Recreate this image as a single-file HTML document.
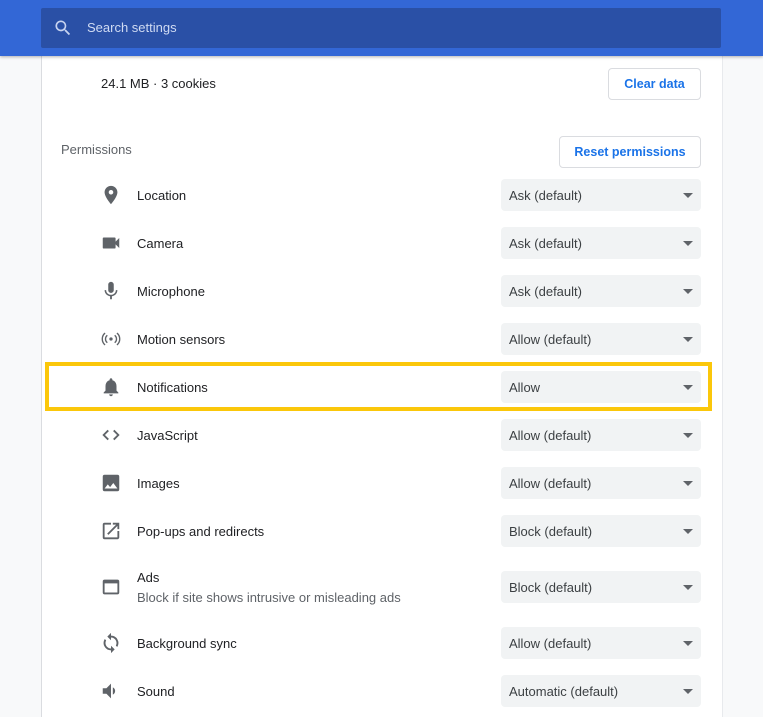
<!DOCTYPE html>
<html><head><style>
body{margin:0;width:763px;height:717px;overflow:hidden;background:#f8f9fa;font-family:"Liberation Sans",sans-serif;font-size:13px;color:#202124;position:relative}
.hdr{position:absolute;left:0;top:0;width:763px;height:56px;background:#3367d6;box-shadow:0 1px 3px rgba(0,0,0,.3);z-index:2}
.search{position:absolute;left:41px;top:8px;width:680px;height:40px;background:#2a50a6;border-radius:2px}
.search span{position:absolute;left:46px;top:12px;color:#d0dbf3;font-size:13px}
.card{position:absolute;left:41px;top:56px;width:680px;height:661px;background:#fff;border-left:1px solid #dadce0;border-right:1px solid #e8eaed}
.abs{position:absolute}
.btn{position:absolute;border:1px solid #dadce0;border-radius:4px;color:#1a73e8;font-weight:bold;font-size:12.5px;text-align:center;box-sizing:border-box;background:#fff}
.sel{position:absolute;left:501px;width:200px;height:32px;background:#f1f3f4;border-radius:4px}
.sel span{position:absolute;left:8px;top:9px;color:#3c4043}
.sel i{position:absolute;right:8px;top:14px;border-left:5px solid transparent;border-right:5px solid transparent;border-top:5px solid #5f6368}
.lbl{position:absolute;left:137px;color:#202124}
.ic{position:absolute;left:100px;width:22px;height:22px}
.hl{position:absolute;left:45px;top:362px;width:667px;height:49px;border:4px solid #fbc70a;box-sizing:border-box}
</style></head><body>
<div class="hdr"><div class="search">
<svg class="abs" style="left:12px;top:10px" width="20" height="20" viewBox="0 0 24 24"><path fill="#c8d4f0" d="M15.5 14h-.8l-.3-.3A6.5 6.5 0 1 0 9.5 16c1.6 0 3.1-.6 4.2-1.6l.3.3v.8l5 5 1.5-1.5-5-5zm-6 0C7 14 5 12 5 9.5S7 5 9.5 5 14 7 14 9.5 12 14 9.5 14z"/></svg>
<span>Search settings</span></div></div>
<div class="card"></div>
<div class="abs" style="left:101px;top:76px;color:#202124">24.1 MB · 3 cookies</div>
<div class="btn" style="left:608px;top:68px;width:93px;height:32px;line-height:30px">Clear data</div>
<div class="abs" style="left:61px;top:142px;color:#5f6368">Permissions</div>
<div class="btn" style="left:559px;top:136px;width:142px;height:32px;line-height:30px">Reset permissions</div>
<div class="hl"></div>

<svg class="ic" style="top:184px" viewBox="0 0 24 24"><path fill="#5f6368" d="M12 2C8.1 2 5 5.1 5 9c0 5.2 7 13 7 13s7-7.8 7-13c0-3.9-3.1-7-7-7zm0 9.5a2.5 2.5 0 1 1 0-5 2.5 2.5 0 0 1 0 5z"/></svg>
<div class="lbl" style="top:188px">Location</div>
<div class="sel" style="top:179px"><span>Ask (default)</span><i></i></div>

<svg class="ic" style="top:232px" viewBox="0 0 24 24"><path fill="#5f6368" d="M17 10.5V7a1 1 0 0 0-1-1H4a1 1 0 0 0-1 1v10a1 1 0 0 0 1 1h12a1 1 0 0 0 1-1v-3.5l4 4v-11l-4 4z"/></svg>
<div class="lbl" style="top:236px">Camera</div>
<div class="sel" style="top:227px"><span>Ask (default)</span><i></i></div>

<svg class="ic" style="top:280px" viewBox="0 0 24 24"><path fill="#5f6368" d="M12 14c1.7 0 3-1.3 3-3V5c0-1.7-1.3-3-3-3S9 3.3 9 5v6c0 1.7 1.3 3 3 3zm5.3-3c0 3-2.5 5.1-5.3 5.1S6.7 14 6.7 11H5c0 3.4 2.7 6.2 6 6.7V21h2v-3.3c3.3-.5 6-3.3 6-6.7h-1.7z"/></svg>
<div class="lbl" style="top:284px">Microphone</div>
<div class="sel" style="top:275px"><span>Ask (default)</span><i></i></div>

<svg class="ic" style="top:328px" viewBox="0 0 24 24"><g fill="none" stroke="#5f6368" stroke-width="1.5"><path d="M8 8a5 5 0 0 0 0 8M16 8a5 5 0 0 1 0 8M5.5 5.5a8.5 8.5 0 0 0 0 13M18.5 5.5a8.5 8.5 0 0 1 0 13"/></g><circle cx="12" cy="12" r="1.8" fill="#5f6368"/></svg>
<div class="lbl" style="top:332px">Motion sensors</div>
<div class="sel" style="top:323px"><span>Allow (default)</span><i></i></div>

<svg class="ic" style="top:376px" viewBox="0 0 24 24"><path fill="#5f6368" d="M12 22c1.1 0 2-.9 2-2h-4c0 1.1.9 2 2 2zm6-6v-5c0-3.1-1.6-5.6-4.5-6.3V4c0-.8-.7-1.5-1.5-1.5s-1.5.7-1.5 1.5v.7C7.6 5.4 6 7.9 6 11v5l-2 2v1h16v-1l-2-2z"/></svg>
<div class="lbl" style="top:380px">Notifications</div>
<div class="sel" style="top:371px"><span>Allow</span><i></i></div>

<svg class="ic" style="top:424px" viewBox="0 0 24 24"><path fill="none" stroke="#5f6368" stroke-width="2" d="M9 7l-5 5 5 5M15 7l5 5-5 5"/></svg>
<div class="lbl" style="top:428px">JavaScript</div>
<div class="sel" style="top:419px"><span>Allow (default)</span><i></i></div>

<svg class="ic" style="top:472px" viewBox="0 0 24 24"><path fill="#5f6368" d="M21 19V5a2 2 0 0 0-2-2H5a2 2 0 0 0-2 2v14a2 2 0 0 0 2 2h14a2 2 0 0 0 2-2zM8.5 13.5l2.5 3 3.5-4.5 4.5 6H5l3.5-4.5z"/></svg>
<div class="lbl" style="top:476px">Images</div>
<div class="sel" style="top:467px"><span>Allow (default)</span><i></i></div>

<svg class="ic" style="top:520px" viewBox="0 0 24 24"><path fill="#5f6368" d="M19 19H5V5h7V3H5a2 2 0 0 0-2 2v14a2 2 0 0 0 2 2h14c1.1 0 2-.9 2-2v-7h-2v7zM14 3v2h3.6l-9.8 9.8 1.4 1.4L19 6.4V10h2V3h-7z"/></svg>
<div class="lbl" style="top:524px">Pop-ups and redirects</div>
<div class="sel" style="top:515px"><span>Block (default)</span><i></i></div>

<svg class="ic" style="top:576px" viewBox="0 0 24 24"><path fill="#5f6368" d="M19 4H5a2 2 0 0 0-2 2v12a2 2 0 0 0 2 2h14a2 2 0 0 0 2-2V6a2 2 0 0 0-2-2zm0 14H5V8h14v10z"/></svg>
<div class="lbl" style="top:570px">Ads</div>
<div class="lbl" style="top:590px;color:#5f6368">Block if site shows intrusive or misleading ads</div>
<div class="sel" style="top:571px"><span>Block (default)</span><i></i></div>

<svg class="ic" style="top:632px" viewBox="0 0 24 24"><path fill="#5f6368" d="M12 4V1L8 5l4 4V6c3.3 0 6 2.7 6 6 0 1-.3 2-.7 2.8l1.5 1.5A8 8 0 0 0 12 4zm0 14c-3.3 0-6-2.7-6-6 0-1 .3-2 .7-2.8L5.2 7.7A8 8 0 0 0 12 20v3l4-4-4-4v3z"/></svg>
<div class="lbl" style="top:636px">Background sync</div>
<div class="sel" style="top:627px"><span>Allow (default)</span><i></i></div>

<svg class="ic" style="top:680px" viewBox="0 0 24 24"><path fill="#5f6368" d="M3 9v6h4l5 5V4L7 9H3zm13.5 3A4.5 4.5 0 0 0 14 8v8a4.5 4.5 0 0 0 2.5-4z"/></svg>
<div class="lbl" style="top:684px">Sound</div>
<div class="sel" style="top:675px"><span>Automatic (default)</span><i></i></div>
</body></html>
